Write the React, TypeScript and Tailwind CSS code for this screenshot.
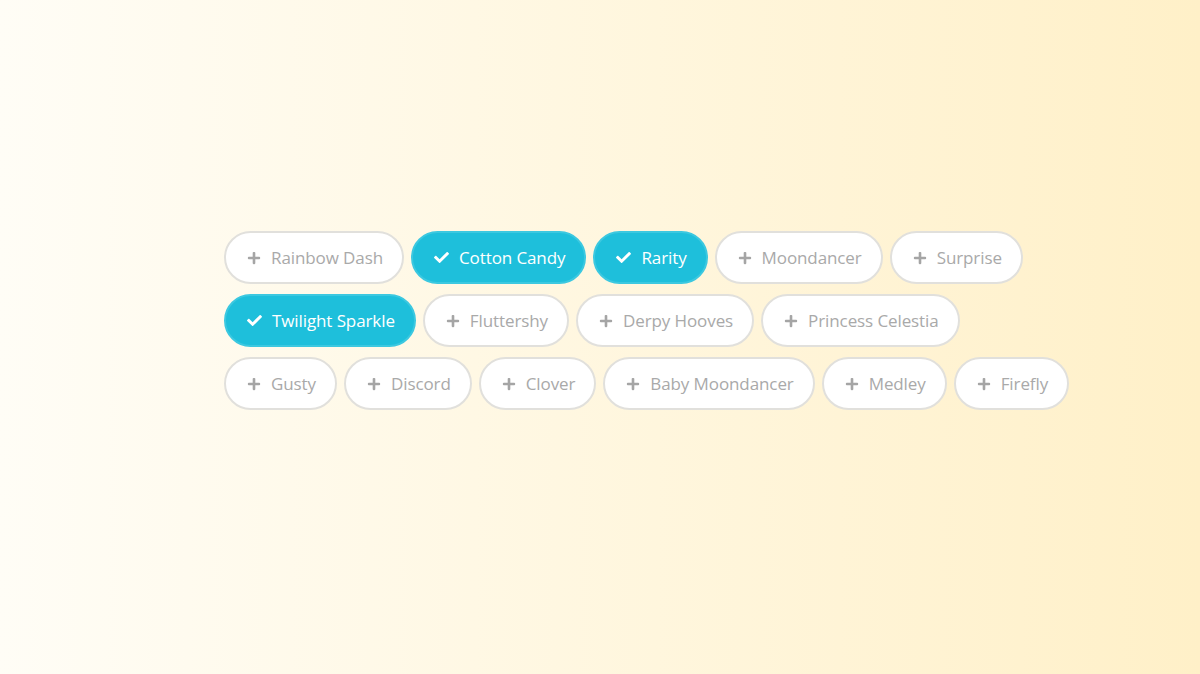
import React, { useState } from "react";
import { FaPlus, FaCheck } from "react-icons/fa";

const names = [
    "Rainbow Dash",
    "Cotton Candy",
    "Rarity",
    "Moondancer",
    "Surprise",
    "Twilight Sparkle",
    "Fluttershy",
    "Derpy Hooves",
    "Princess Celestia",
    "Gusty",
    "Discord",
    "Clover",
    "Baby Moondancer",
    "Medley",
    "Firefly",
];

const App: React.FC = () => {
    const [selected, setSelected] = useState<string[]>(["Cotton Candy", "Rarity", "Twilight Sparkle"]);

    const toggle = (name: string) => {
        setSelected((prev) => (prev.includes(name) ? prev.filter((n) => n !== name) : [...prev, name]));
    };

    return (
        <div
            className="min-h-[674px] w-full bg-gradient-to-r from-[#fffdf6] to-[#fff0c8] pt-[231px]"
            style={{ fontFamily: '"Open Sans", "Noto Sans", sans-serif' }}
        >
            <div className="ml-[224px] flex w-[854px] flex-wrap gap-x-[7px] gap-y-[10px]">
                {names.map((name) => {
                    const on = selected.includes(name);
                    return (
                        <button
                            key={name}
                            onClick={() => toggle(name)}
                            className={
                                on
                                    ? "flex h-[53px] items-center gap-[10px] rounded-full border-2 border-[#3cc8e0] bg-[#1ebfdb] pl-[21px] pr-[19px] text-[17px] tracking-[-0.1px] text-white"
                                    : "flex h-[53px] items-center gap-[10px] rounded-full border-2 border-[#e1e0dc] bg-white pl-[21px] pr-[19px] text-[17px] tracking-[-0.1px] text-[#a9a9a9]"
                            }
                        >
                            {on ? (
                                <FaCheck className="h-[15px] w-[15px] text-white" />
                            ) : (
                                <FaPlus className="h-[14px] w-[14px] text-[#a5a5a5]" />
                            )}
                            <span>{name}</span>
                        </button>
                    );
                })}
            </div>
        </div>
    );
};

export default App;
